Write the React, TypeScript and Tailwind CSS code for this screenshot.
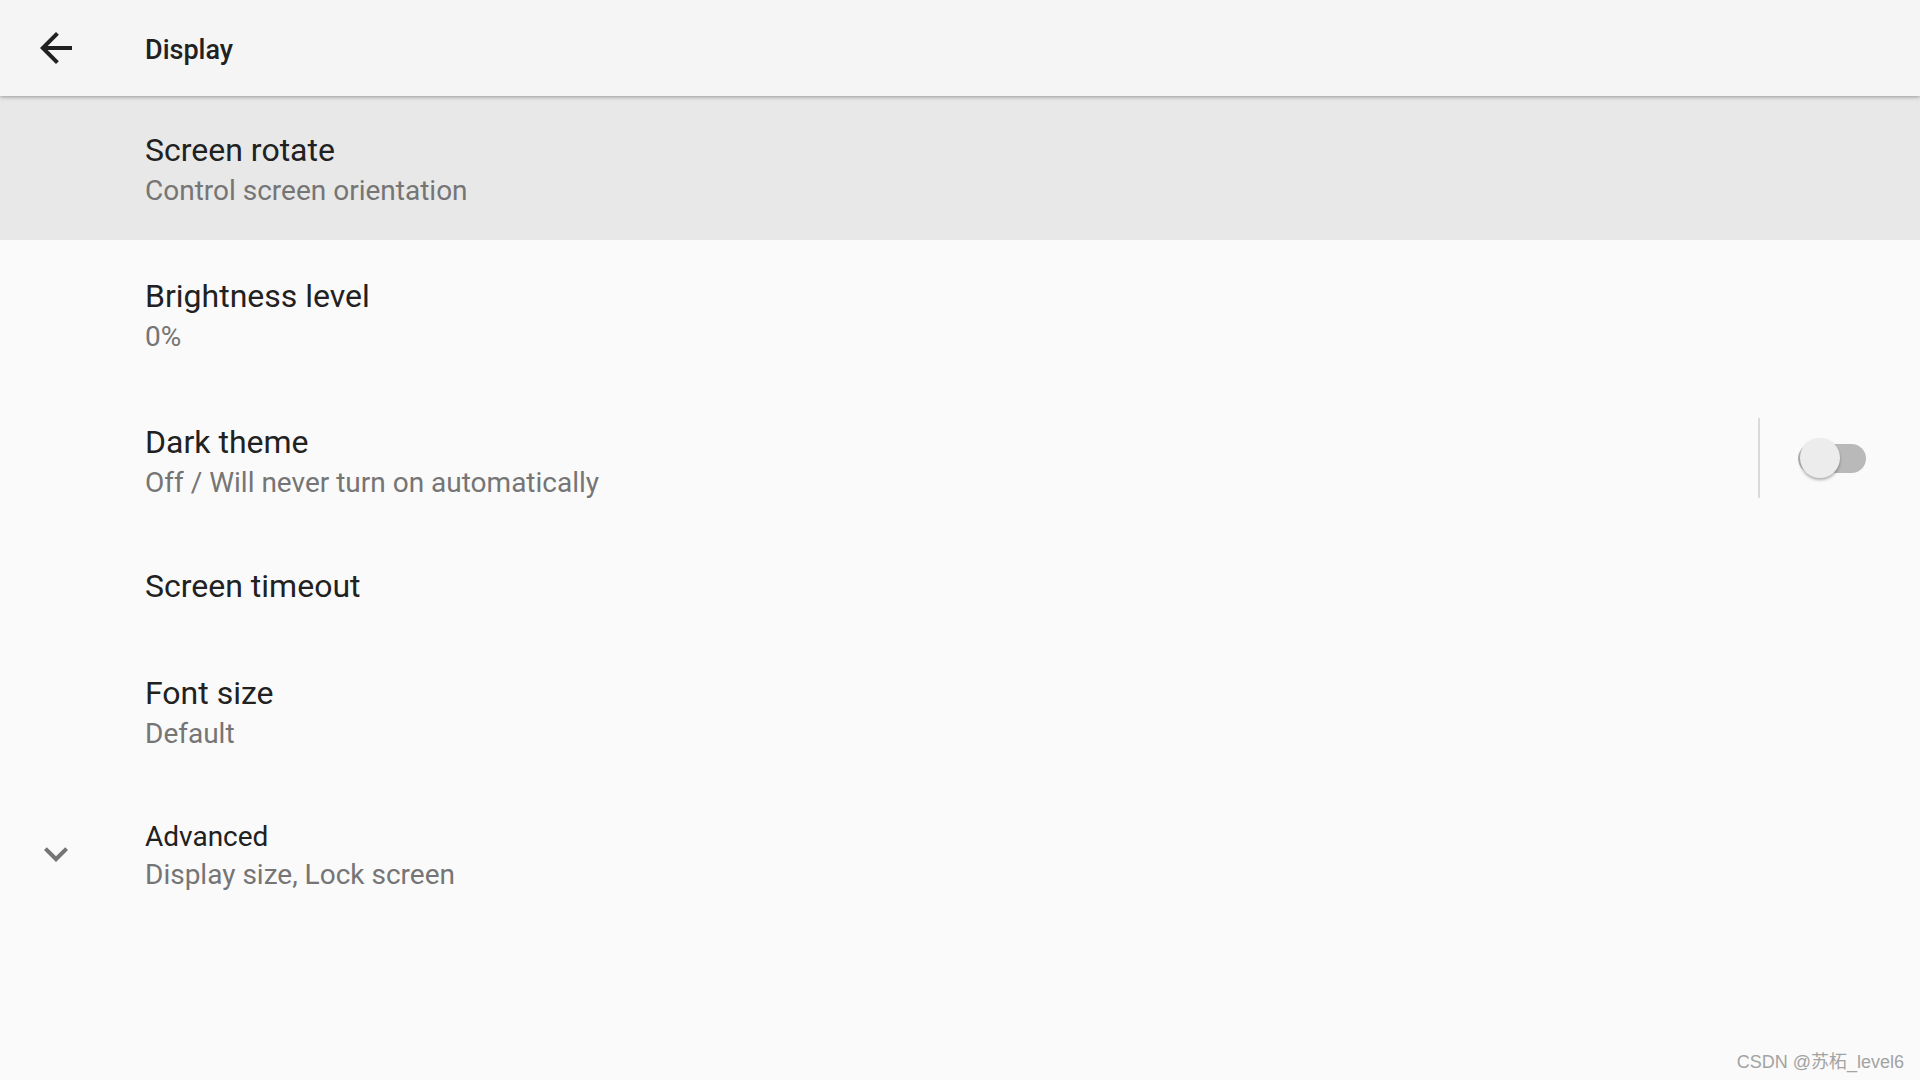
import React from "react";

function BackArrow() {
  return (
    <svg width="48" height="48" viewBox="0 0 24 24" fill="#212121">
      <path d="M20 11H7.83l5.59-5.59L12 4l-8 8 8 8 1.41-1.41L7.83 13H20v-2z" />
    </svg>
  );
}

function ExpandMore() {
  return (
    <svg width="48" height="48" viewBox="0 0 24 24" fill="#757575">
      <path d="M16.59 8.59L12 13.17 7.41 8.59 6 10l6 6 6-6z" />
    </svg>
  );
}

type RowProps = {
  title: string;
  summary?: string;
  selected?: boolean;
  icon?: React.ReactNode;
  widget?: React.ReactNode;
  small?: boolean;
  rowCls: string;
  textCls?: string;
};

function Row({ title, summary, selected, icon, widget, small, rowCls, textCls = "" }: RowProps) {
  return (
    <div className={`flex items-center ${rowCls} ${selected ? "bg-[#e8e8e8]" : ""}`}>
      <div className="w-[145px] shrink-0 flex items-center pl-[32px]">{icon}</div>
      <div className={`flex-1 flex flex-col justify-center ${textCls}`}>
        <div className={`${small ? "text-[28px] leading-[36px]" : "text-[32px] leading-[40px]"} text-[#212121]`}>
          {title}
        </div>
        {summary && (
          <div className={`text-[28px] ${small ? "leading-[40px]" : "leading-[42px]"} text-[#757575]`}>{summary}</div>
        )}
      </div>
      {widget}
    </div>
  );
}

function DarkSwitch() {
  return (
    <div className="flex items-center pr-[54px] mb-[10px]">
      <div className="w-[2px] h-[80px] bg-[#dadada]" />
      <div className="relative ml-[38px] w-[68px] h-[40px]">
        <div className="absolute left-0 top-[6px] w-[68px] h-[29px] rounded-full bg-[#b9b9b9]" />
        <div className="absolute left-[2px] top-0 w-[40px] h-[40px] rounded-full bg-[#ececec] shadow-[0_2px_3px_rgba(0,0,0,0.3)]" />
      </div>
    </div>
  );
}

export default function App() {
  return (
    <div
      className="relative w-full h-[1080px] bg-[#fafafa] overflow-hidden"
      style={{ fontFamily: "Roboto, 'Noto Sans', sans-serif" }}
    >
      <header className="relative z-10 h-[96px] bg-[#f5f5f5] flex items-center shadow-[0_1px_4px_rgba(0,0,0,0.35)]">
        <div className="w-[145px] shrink-0 flex items-center pl-[32px]">
          <BackArrow />
        </div>
        <div className="mt-[4px] text-[27px] font-medium text-[#212121]">Display</div>
      </header>
      <main className="flex flex-col">
        <Row rowCls="h-[144px] pt-[6px]" title="Screen rotate" summary="Control screen orientation" selected />
        <Row rowCls="h-[146px] pt-[8px]" title="Brightness level" summary="0%" />
        <Row
          rowCls="h-[146px] pt-[8px]"
          title="Dark theme"
          summary="Off / Will never turn on automatically"
          widget={<DarkSwitch />}
        />
        <Row rowCls="h-[106px] pt-[2px]" title="Screen timeout" />
        <Row rowCls="h-[144px] pt-[8px]" title="Font size" summary="Default" />
        <Row
          rowCls="h-[144px]"
          textCls="mt-[5px]"
          title="Advanced"
          summary="Display size, Lock screen"
          small
          icon={<ExpandMore />}
        />
      </main>
      <div
        className="absolute right-[16px] bottom-[4px] text-[18px] text-[#a3a3a3]"
        style={{ fontFamily: "'Liberation Sans', 'Noto Sans CJK SC', sans-serif" }}
      >
        CSDN @苏柘_level6
      </div>
    </div>
  );
}
